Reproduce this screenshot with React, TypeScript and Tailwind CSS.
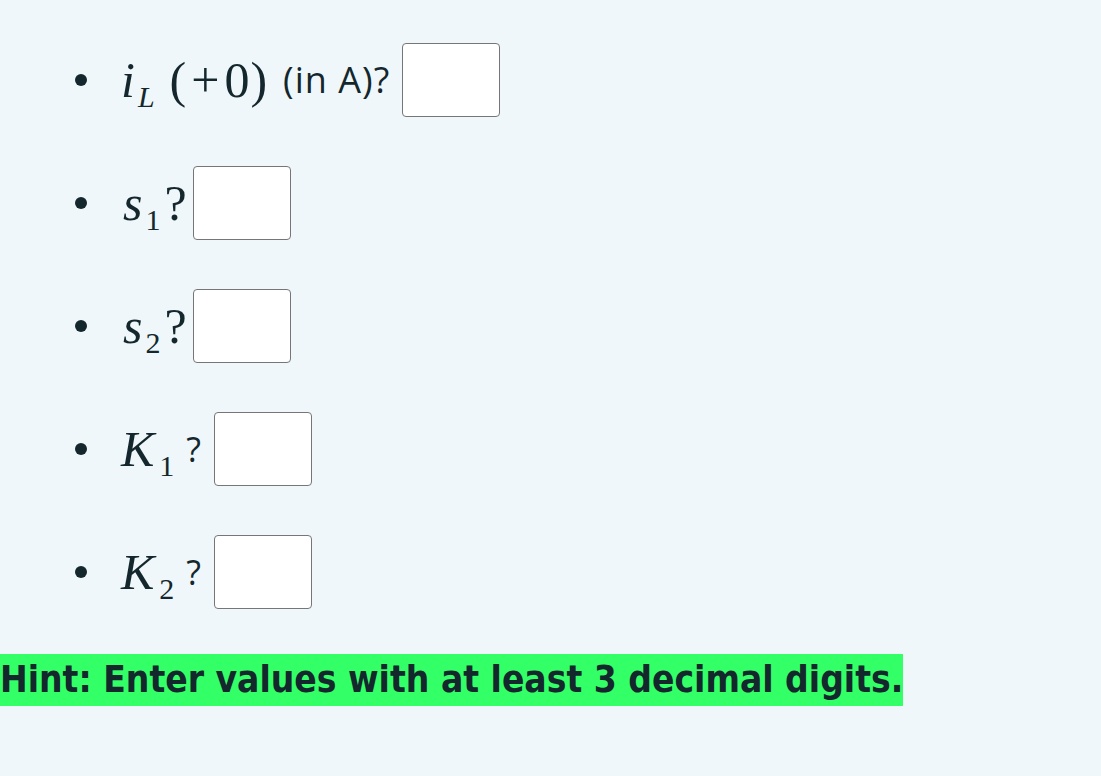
import type { ReactNode } from 'react'

const serif = { fontFamily: '"Liberation Serif", "DejaVu Serif", serif' }

function Bullet() {
  return <span className="mr-[34px] ml-[75px] inline-block h-[12px] w-[12px] shrink-0 rounded-full bg-[#13272d]" />
}

function Box() {
  return <input type="text" className="h-[74px] w-[98px] shrink-0 rounded-[4px] border-[1.5px] border-[#767676] bg-white" />
}

function Row({ children }: { children: ReactNode }) {
  return (
    <li className="flex h-[74px] items-center">
      <Bullet />
      {children}
      <Box />
    </li>
  )
}

function Sub({ children, className = '' }: { children: ReactNode; className?: string }) {
  return <span className={`relative top-[10px] text-[30px] leading-none ${className}`}>{children}</span>
}

export default function App() {
  return (
    <div
      className="min-h-screen bg-[#eff7fa] pt-[43px] text-[#13272d]"
      style={{ fontFamily: '"Open Sans", "Noto Sans", sans-serif' }}
    >
      <ul className="flex flex-col gap-[49px]">
        <Row>
          <span className="flex items-baseline text-[50px] leading-none" style={serif}>
            <i>i</i>
            <Sub className="ml-[3px]">
              <i>L</i>
            </Sub>
            <span className="ml-[15px]">(</span>
            <span className="mx-[5px]">+</span>
            <span>0</span>
            <span className="ml-[1px]">)</span>
          </span>
          <span className="mr-[12px] ml-[16px] text-[36px] tracking-[1px]">(in A)?</span>
        </Row>
        <Row>
          <span className="mr-[6px] flex items-baseline text-[50px] leading-none" style={serif}>
            <i className="ml-[2px]">s</i>
            <Sub className="ml-[3px]">1</Sub>
            <span className="ml-[4px]">?</span>
          </span>
        </Row>
        <Row>
          <span className="mr-[6px] flex items-baseline text-[50px] leading-none" style={serif}>
            <i className="ml-[2px]">s</i>
            <Sub className="ml-[3px]">2</Sub>
            <span className="ml-[4px]">?</span>
          </span>
        </Row>
        <Row>
          <span className="flex items-baseline text-[50px] leading-none" style={serif}>
            <i>K</i>
            <Sub className="ml-[5px]">1</Sub>
          </span>
          <span className="mr-[13px] ml-[12px] text-[34px]">?</span>
        </Row>
        <Row>
          <span className="flex items-baseline text-[50px] leading-none" style={serif}>
            <i>K</i>
            <Sub className="ml-[5px]">2</Sub>
          </span>
          <span className="mr-[13px] ml-[12px] text-[34px]">?</span>
        </Row>
      </ul>
      <div className="mt-[45px]">
        <span
          className="inline-block bg-[#33ff66] text-[36.8px] leading-[52px] font-bold"
          style={{ fontFamily: '"DejaVu Sans Condensed", "DejaVu Sans", sans-serif' }}
        >
          Hint: Enter values with at least 3 decimal digits.
        </span>
      </div>
    </div>
  )
}
